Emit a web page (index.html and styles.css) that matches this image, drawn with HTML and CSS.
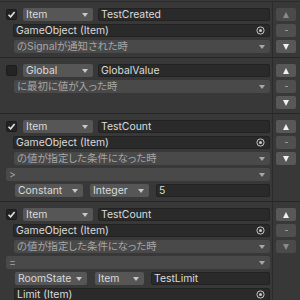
FILE: index.html
```html
<!DOCTYPE html>
<html>
<head>
<meta charset="utf-8">
<link rel="stylesheet" href="styles.css">
</head>
<body>
<div class="list">
  <div class="block">
    <div class="content">
      <div class="row">
        <span class="check"><svg width="9" height="9" viewBox="0 0 9 9"><path d="M1.5 4.8 L3.6 6.8 L7.6 2" fill="none" stroke="#e8e8e8" stroke-width="1.5"/></svg></span>
        <div class="popup w-item">Item<i class="arr"></i></div>
        <div class="field grow">TestCreated</div>
      </div>
      <div class="row ind13">
        <div class="field grow obj">GameObject (Item)<svg class="tgt" width="9" height="9" viewBox="0 0 9 9"><circle cx="4.5" cy="4.5" r="3.6" fill="none" stroke="#c8c8c8" stroke-width="1"/><circle cx="4.5" cy="4.5" r="1.5" fill="#c8c8c8"/></svg></div>
      </div>
      <div class="row ind14">
        <div class="popup dim grow">のSignalが通知された時<i class="arr"></i></div>
      </div>
    </div>
    <div class="btns">
      <div class="btn off"><i class="up"></i></div>
      <div class="btn mid"><i class="minus"></i></div>
      <div class="btn"><i class="down"></i></div>
    </div>
  </div>

  <div class="block">
    <div class="content">
      <div class="row">
        <span class="check"></span>
        <div class="popup w-item">Global<i class="arr"></i></div>
        <div class="field grow">GlobalValue</div>
      </div>
      <div class="row ind14">
        <div class="popup dim grow">に最初に値が入った時<i class="arr"></i></div>
      </div>
    </div>
    <div class="btns">
      <div class="btn"><i class="up"></i></div>
      <div class="btn mid"><i class="minus"></i></div>
      <div class="btn"><i class="down"></i></div>
    </div>
  </div>

  <div class="block">
    <div class="content">
      <div class="row">
        <span class="check"><svg width="9" height="9" viewBox="0 0 9 9"><path d="M1.5 4.8 L3.6 6.8 L7.6 2" fill="none" stroke="#e8e8e8" stroke-width="1.5"/></svg></span>
        <div class="popup w-item">Item<i class="arr"></i></div>
        <div class="field grow">TestCount</div>
      </div>
      <div class="row ind13">
        <div class="field grow obj">GameObject (Item)<svg class="tgt" width="9" height="9" viewBox="0 0 9 9"><circle cx="4.5" cy="4.5" r="3.6" fill="none" stroke="#c8c8c8" stroke-width="1"/><circle cx="4.5" cy="4.5" r="1.5" fill="#c8c8c8"/></svg></div>
      </div>
      <div class="row ind14">
        <div class="popup dim grow">の値が指定した条件になった時<i class="arr"></i></div>
      </div>
      <div class="row ind6">
        <div class="popup dim grow">&gt;<i class="arr"></i></div>
      </div>
      <div class="row ind15">
        <div class="popup w-const">Constant<i class="arr"></i></div>
        <div class="popup w-int">Integer<i class="arr"></i></div>
        <div class="field grow">5</div>
      </div>
    </div>
    <div class="btns">
      <div class="btn"><i class="up"></i></div>
      <div class="btn mid"><i class="minus"></i></div>
      <div class="btn"><i class="down"></i></div>
    </div>
  </div>

  <div class="block">
    <div class="content">
      <div class="row">
        <span class="check"><svg width="9" height="9" viewBox="0 0 9 9"><path d="M1.5 4.8 L3.6 6.8 L7.6 2" fill="none" stroke="#e8e8e8" stroke-width="1.5"/></svg></span>
        <div class="popup w-item">Item<i class="arr"></i></div>
        <div class="field grow">TestCount</div>
      </div>
      <div class="row ind13">
        <div class="field grow obj">GameObject (Item)<svg class="tgt" width="9" height="9" viewBox="0 0 9 9"><circle cx="4.5" cy="4.5" r="3.6" fill="none" stroke="#c8c8c8" stroke-width="1"/><circle cx="4.5" cy="4.5" r="1.5" fill="#c8c8c8"/></svg></div>
      </div>
      <div class="row ind14">
        <div class="popup dim grow">の値が指定した条件になった時<i class="arr"></i></div>
      </div>
      <div class="row ind6">
        <div class="popup dim grow">=<i class="arr"></i></div>
      </div>
      <div class="row ind15">
        <div class="popup w-room">RoomState<i class="arr"></i></div>
        <div class="popup w-item2">Item<i class="arr"></i></div>
        <div class="field grow">TestLimit</div>
      </div>
      <div class="row ind14">
        <div class="field grow obj">Limit (Item)<svg class="tgt" width="9" height="9" viewBox="0 0 9 9"><circle cx="4.5" cy="4.5" r="3.6" fill="none" stroke="#c8c8c8" stroke-width="1"/><circle cx="4.5" cy="4.5" r="1.5" fill="#c8c8c8"/></svg></div>
      </div>
    </div>
    <div class="btns">
      <div class="btn"><i class="up"></i></div>
      <div class="btn mid"><i class="minus"></i></div>
      <div class="btn off"><i class="down"></i></div>
    </div>
  </div>
</div>
</body>
</html>
```

FILE: styles.css
```css
html, body {
  margin: 0;
  padding: 0;
}
body {
  width: 300px;
  height: 300px;
  overflow: hidden;
  background: #383838;
  font-family: Inter, "Noto Sans CJK JP", sans-serif;
  font-size: 10.4px;
  font-feature-settings: "palt";
  color: #d2d2d2;
}
.list {
  padding-top: 1px;
  border-top: 1px solid #2c2c2c;
  margin-top: -1px;
}
.block {
  display: flex;
  border-top: 1px solid #262626;
}
.list .block:first-child {
  border-top-color: #2c2c2c;
}
.content {
  flex: 1;
  display: flex;
  flex-direction: column;
  gap: 3px;
  padding: 6px 2px 4px 0;
  border-right: 1px solid #2b2b2b;
}
.row {
  display: flex;
  align-items: center;
  height: 13px;
  gap: 5px;
}
.ind6 { padding-left: 6px; }
.ind13 { padding-left: 13px; }
.ind14 { padding-left: 14px; }
.ind15 { padding-left: 15px; gap: 7px; }
.check {
  width: 11px;
  height: 11px;
  margin-left: 6px;
  margin-right: 1px;
  box-sizing: border-box;
  background: #242424;
  border: 1px solid #1c1c1c;
  border-radius: 2px;
  display: flex;
  align-items: center;
  justify-content: center;
  flex: none;
}
.popup, .field {
  position: relative;
  height: 13px;
  line-height: 13px;
  box-sizing: border-box;
  padding-left: 3px;
  border-radius: 2px;
  white-space: nowrap;
  overflow: hidden;
  flex: none;
}
.popup {
  background: #565656;
  color: #dadada;
}
.popup.dim {
  background: #494949;
  color: #a6a6a6;
}
.field {
  background: #2a2a2a;
  border: 1px solid #222222;
  line-height: 11px;
  padding-left: 2px;
  color: #dcdcdc;
}
.grow { flex: 1; }
.w-item { width: 70px; }
.w-const { width: 68px; }
.w-int { width: 59px; }
.w-room { width: 72px; margin-right: 1px; }
.w-item2 { width: 49px; }
.arr {
  position: absolute;
  right: 5px;
  top: 5px;
  width: 0;
  height: 0;
  border-left: 3px solid transparent;
  border-right: 3px solid transparent;
  border-top: 4px solid #c8c8c8;
}
.dim .arr {
  border-top-color: #a8a8a8;
}
.tgt {
  position: absolute;
  right: 4px;
  top: 1px;
}
.btns {
  width: 27px;
  box-sizing: border-box;
  padding: 6px 4px 4px 3px;
  display: flex;
  flex-direction: column;
  gap: 3px;
  flex: none;
}
.btn {
  height: 13px;
  background: #585858;
  border-radius: 2px;
  display: flex;
  align-items: center;
  justify-content: center;
}
.btn.off {
  background: #4a4a4a;
}
.btn.mid {
  background: #4f4f4f;
}
.up {
  width: 0;
  height: 0;
  border-left: 3.5px solid transparent;
  border-right: 3.5px solid transparent;
  border-bottom: 6px solid #f0f0f0;
}
.down {
  width: 0;
  height: 0;
  border-left: 3.5px solid transparent;
  border-right: 3.5px solid transparent;
  border-top: 6px solid #f0f0f0;
}
.off .up { border-bottom-color: #8a8a8a; }
.off .down { border-top-color: #8a8a8a; }
.minus {
  width: 3px;
  height: 1px;
  background: #9a9a9a;
}
```
